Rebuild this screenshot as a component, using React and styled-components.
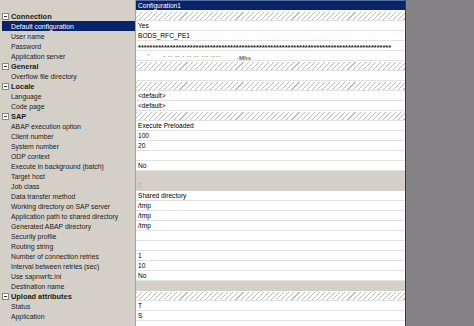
import React from 'react';
import styled, { createGlobalStyle, css } from 'styled-components';

const GlobalStyle = createGlobalStyle`
  html, body {
    margin: 0;
    padding: 0;
    height: 100%;
    overflow: hidden;
    background: #858385;
  }
  #root {
    height: 100%;
  }
`;

const rows = [
  { label: 'Connection', cat: true },
  { label: 'Default configuration', value: 'Yes', selected: true },
  { label: 'User name', value: 'BODS_RFC_PE1' },
  { label: 'Password', value: '*'.repeat(88), kind: 'password' },
  { label: 'Application server', kind: 'garble' },
  { label: 'General', cat: true },
  { label: 'Overflow file directory' },
  { label: 'Locale', cat: true },
  { label: 'Language', value: '<default>' },
  { label: 'Code page', value: '<default>' },
  { label: 'SAP', cat: true },
  { label: 'ABAP execution option', value: 'Execute Preloaded' },
  { label: 'Client number', value: '100' },
  { label: 'System number', value: '20' },
  { label: 'ODP context' },
  { label: 'Execute in background (batch)', value: 'No' },
  { label: 'Target host', kind: 'disabled' },
  { label: 'Job class', value: 'C', kind: 'disabled' },
  { label: 'Data transfer method', value: 'Shared directory' },
  { label: 'Working directory on SAP server', value: '/tmp' },
  { label: 'Application path to shared directory', value: '/tmp' },
  { label: 'Generated ABAP directory', value: '/tmp' },
  { label: 'Security profile' },
  { label: 'Routing string' },
  { label: 'Number of connection retries', value: '1' },
  { label: 'Interval between retries (sec)', value: '10' },
  { label: 'Use sapnwrfc.ini', value: 'No' },
  { label: 'Destination name', kind: 'disabled' },
  { label: 'Upload attributes', cat: true },
  { label: 'Status', value: 'T' },
  { label: 'Application', value: 'S' },
  { label: '' },
];

const App = () => (
  <>
    <GlobalStyle />
    <Page>
      <Grid>
        <HeaderRow>
          <LabelHead />
          <ValueHead>Configuration1</ValueHead>
        </HeaderRow>
        {rows.map((r, i) => (
          <Row key={i}>
            <LabelCell>
              {r.cat && <Toggle />}
              <LabelText $cat={r.cat} $selected={r.selected}>
                {r.label}
              </LabelText>
            </LabelCell>
            <ValueCell $kind={r.cat ? 'hatch' : r.kind}>
              {r.kind === 'garble' ? (
                <Garble>
                  <span>'</span>
                  <Dots>· ·· ·· · ·· ·· ··· ····</Dots>
                  <Low>·Mhs</Low>
                </Garble>
              ) : (
                r.value
              )}
            </ValueCell>
          </Row>
        ))}
      </Grid>
      <SidePane />
    </Page>
  </>
);

export default App;

const Page = styled.div`
  display: flex;
  height: 100%;
  font-family: 'Liberation Sans', Arial, sans-serif;
  font-size: 6.6px;
  color: #000;
`;

const Grid = styled.div`
  width: 405px;
  display: flex;
  flex-direction: column;
  background: #fff;
  overflow: hidden;
`;

const HeaderRow = styled.div`
  display: grid;
  grid-template-columns: 136px 1fr;
  height: 11px;
  flex-shrink: 0;
`;

const LabelHead = styled.div`
  background: #d4d0c8;
  border-right: 1px solid #a6a39c;
`;

const ValueHead = styled.div`
  background: #0a246a;
  border-top: 1px solid #5a6fa8;
  border-bottom: 1px solid #fff;
  color: #fff;
  padding-left: 2px;
  line-height: 8px;
  display: flex;
  align-items: center;
`;

const Row = styled.div`
  display: grid;
  grid-template-columns: 136px 1fr;
  height: 10px;
  flex-shrink: 0;
`;

const LabelCell = styled.div`
  display: flex;
  align-items: stretch;
  padding-left: 2px;
  background: #d4d0c8;
  border-right: 1px solid #a6a39c;
  overflow: hidden;
`;

const Toggle = styled.span`
  align-self: center;
  position: relative;
  width: 5px;
  height: 5px;
  border: 1px solid #8a8780;
  background: #fff;
  flex-shrink: 0;
  &::after {
    content: '';
    position: absolute;
    left: 1px;
    right: 1px;
    top: 2px;
    height: 1px;
    background: #333;
  }
`;

const LabelText = styled.div`
  flex: 1;
  display: flex;
  align-items: center;
  white-space: nowrap;
  padding-left: ${(p) => (p.$cat ? '2px' : '9px')};
  font-weight: ${(p) => (p.$cat ? 700 : 400)};
  font-size: ${(p) => (p.$cat ? '7.4px' : '6.85px')};
  color: #1a1a1a;
  ${(p) =>
    p.$selected &&
    css`
      background: #0a246a;
      color: #fff;
    `}
`;

const hatch = css`
  background: repeating-linear-gradient(
    135deg,
    #bcbcbc 0 0.8px,
    #fff 0.8px 3.6px
  );
  border-top: 1px solid #fff;
`;

const ValueCell = styled.div`
  display: flex;
  align-items: center;
  padding-left: 2px;
  white-space: nowrap;
  overflow: hidden;
  background: #fff;
  border-bottom: 1px solid #e2e2e2;
  ${(p) => p.$kind === 'hatch' && hatch}
  ${(p) =>
    p.$kind === 'disabled' &&
    css`
      background: #d4d0c8;
      color: #b3b0aa;
      border-bottom-color: #d4d0c8;
    `}
  ${(p) =>
    p.$kind === 'password' &&
    css`
      font-size: 7.4px;
      font-weight: 700;
      color: #222;
      padding-top: 3px;
      align-items: center;
    `}
`;

const Garble = styled.div`
  display: flex;
  align-items: center;
  color: #6a6a6a;
  font-size: 6px;
  font-weight: 700;
  padding-left: 10px;
`;

const Dots = styled.span`
  margin-left: 14px;
  letter-spacing: 0.5px;
`;

const Low = styled.span`
  margin-left: 16px;
  transform: translateY(2px);
`;

const SidePane = styled.div`
  flex: 1;
  background: #858385;
  border-left: 1px solid #3c3b3c;
`;
